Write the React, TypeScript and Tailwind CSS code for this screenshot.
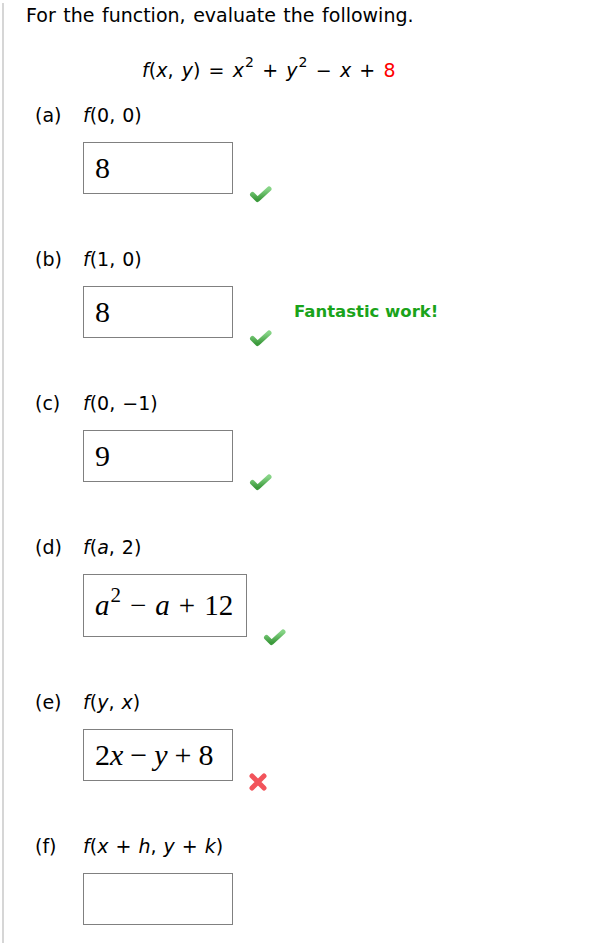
import React from "react";

const sans = { fontFamily: '"DejaVu Sans", Verdana, sans-serif' };

function Check() {
  return (
    <svg width="24" height="19" viewBox="0 0 24 19" className="block">
      <defs>
        <linearGradient id="gck" x1="0" y1="0" x2="0" y2="1">
          <stop offset="0" stopColor="#86d486" />
          <stop offset="1" stopColor="#3c9a3c" />
        </linearGradient>
      </defs>
      <path d="M4.5 9.5 L9.5 14.5 L21 4" fill="none" stroke="url(#gck)" strokeWidth="5" strokeLinecap="round" strokeLinejoin="round" />
    </svg>
  );
}

function Cross() {
  return (
    <svg width="20" height="20" viewBox="0 0 20 20" className="block">
      <path d="M4 4 L16 16 M16 4 L4 16" fill="none" stroke="#f2545b" strokeWidth="5" strokeLinecap="round" />
    </svg>
  );
}

function Sup({ children }: { children: React.ReactNode }) {
  return <span className="relative -top-[10px] ml-[1px] text-[14px] leading-none">{children}</span>;
}

type ItemProps = {
  label: string;
  expr: React.ReactNode;
  answer?: React.ReactNode;
  status?: "ok" | "bad";
  feedback?: string;
  wide?: boolean;
};

function Item({ label, expr, answer, status, feedback, wide }: ItemProps) {
  return (
    <div className="flex flex-col">
      <div className="flex h-[22px] items-center whitespace-nowrap text-[19px] leading-[22px] text-black [word-spacing:1px]">
        <span className="ml-[9px] w-[48px]">{label}</span>
        <span>{expr}</span>
      </div>
      <div className="mt-[16px] ml-[57px] flex items-end">
        <div
          className={
            wide
              ? "flex h-[63px] items-center border border-[#808080] bg-white pl-[11px] pr-[13px]"
              : "flex h-[52px] w-[150px] items-center border border-[#808080] bg-white pl-[11px]"
          }
          style={{ fontFamily: '"Liberation Serif", "Times New Roman", serif' }}
        >
          {answer}
        </div>
        {status === "ok" && (
          <div className="ml-[15px] mb-[-10px]">
            <Check />
          </div>
        )}
        {status === "bad" && (
          <div className="ml-[15px] mb-[-11px]">
            <Cross />
          </div>
        )}
        {feedback && (
          <div className="ml-[22px] self-center text-[16.5px] font-bold text-[#1aa31a]">{feedback}</div>
        )}
      </div>
    </div>
  );
}

const Op = ({ children, wide }: { children: React.ReactNode; wide?: boolean }) => (
  <span className={wide ? "mx-[9px]" : "mx-[7px]"}>{children}</span>
);

export default function App() {
  return (
    <div className="min-h-[943px] bg-white" style={sans}>
      <div className="ml-[2px] mt-[3px] h-[940px] border-l-2 border-[#d6d6d6] pl-[22px] pt-[1px]">
        <div className="h-[22px] whitespace-nowrap text-[19px] leading-[22px] text-black [word-spacing:1.5px]">
          For the function, evaluate the following.
        </div>
        <div className="mt-[33px] ml-[116px] h-[22px] whitespace-nowrap text-[19px] leading-[22px] text-black [word-spacing:2.2px]">
          <i>f</i>(<i>x</i>, <i>y</i>) = <i>x</i>
          <Sup>2</Sup> + <i>y</i>
          <Sup>2</Sup> − <i>x</i> + <span className="text-[#ff0000]">8</span>
        </div>
        <div className="mt-[23px] flex flex-col gap-[54px]">
          <Item
            label="(a)"
            expr={<><i>f</i>(0, 0)</>}
            answer={<span className="text-[30px] leading-none">8</span>}
            status="ok"
          />
          <Item
            label="(b)"
            expr={<><i>f</i>(1, 0)</>}
            answer={<span className="text-[30px] leading-none">8</span>}
            status="ok"
            feedback="Fantastic work!"
          />
          <Item
            label="(c)"
            expr={<><i>f</i>(0, −1)</>}
            answer={<span className="text-[30px] leading-none">9</span>}
            status="ok"
          />
          <Item
            label="(d)"
            expr={<><i>f</i>(<i>a</i>, 2)</>}
            wide
            answer={
              <span className="whitespace-nowrap text-[29px] leading-none">
                <i>a</i>
                <span className="relative -top-[13px] ml-[1px] text-[21px]">2</span>
                <Op wide>−</Op>
                <i>a</i>
                <Op wide>+</Op>
                12
              </span>
            }
            status="ok"
          />
          <Item
            label="(e)"
            expr={<><i>f</i>(<i>y</i>, <i>x</i>)</>}
            answer={
              <span className="whitespace-nowrap text-[30px] leading-none">
                2<i>x</i>
                <Op>−</Op>
                <i>y</i>
                <Op>+</Op>8
              </span>
            }
            status="bad"
          />
          <Item
            label="(f)"
            expr={<><i>f</i>(<i>x</i> + <i>h</i>, <i>y</i> + <i>k</i>)</>}
            answer={null}
          />
        </div>
      </div>
    </div>
  );
}
